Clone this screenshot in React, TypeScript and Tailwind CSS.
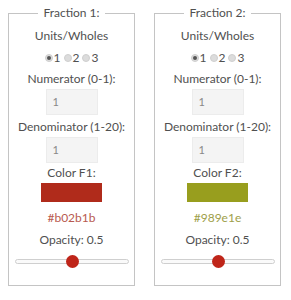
import React from "react";

interface FractionPanelProps {
    index: number;
    color: string;
    hexClass: string;
    swatchClass: string;
}

function Radio({ checked, label }: { checked: boolean; label: string }) {
    return (
        <span className="flex items-center gap-[1px]">
            <span className="w-[8px] h-[8px] rounded-full bg-[#dcdcdc] border border-[#cfcfcf] flex items-center justify-center">
                {checked && <span className="w-[4px] h-[4px] rounded-full bg-[#555]" />}
            </span>
            <span>{label}</span>
        </span>
    );
}

function FractionPanel({ index, color, hexClass, swatchClass }: FractionPanelProps) {
    return (
        <fieldset className="w-[127px] h-[283px] border border-[#c4c4c4] px-[2px] pt-[3px] flex flex-col items-center whitespace-nowrap">
            <legend className="mx-auto px-[5px] leading-[20px]">Fraction {index}:</legend>
            <div className="leading-[20px]">Units/Wholes</div>
            <div className="h-[20px] mt-[2px] flex items-center gap-[3px]">
                <Radio checked label="1" />
                <Radio checked={false} label="2" />
                <Radio checked={false} label="3" />
            </div>
            <div className="leading-[20px] mt-[1px]">Numerator (0-1):</div>
            <div className="w-[52px] h-[26px] bg-[#f4f4f4] border border-[#ececec] text-[#888] text-[11px] pl-[6px] flex items-center">1</div>
            <div className="leading-[20px] mt-[2px]">Denominator (1-20):</div>
            <div className="w-[52px] h-[26px] bg-[#f4f4f4] border border-[#ececec] text-[#888] text-[11px] pl-[6px] flex items-center">1</div>
            <div className="leading-[20px]">Color F{index}:</div>
            <div className={`w-[61px] h-[19px] ${swatchClass}`} />
            <div className={`leading-[20px] mt-[6px] ${hexClass}`}>{color}</div>
            <div className="leading-[20px] mt-[2px]">Opacity: 0.5</div>
            <div className="relative w-[114px] h-[14px] mt-[4px] flex items-center">
                <div className="w-full h-[5px] rounded-full border border-[#cfcfcf] bg-[#fafafa]" />
                <div className="absolute left-[51px] top-[1px] w-[13px] h-[13px] rounded-full bg-[#bf2519]" />
            </div>
        </fieldset>
    );
}

export default function App() {
    return (
        <div className="w-[291px] h-[300px] bg-white flex gap-[19px] pl-[8px] pt-[3px] text-[12px] text-[#505050] font-['Lato',sans-serif]">
            <FractionPanel index={1} color="#b02b1b" hexClass="text-[#b85a4f]" swatchClass="bg-[#b02b1b]" />
            <FractionPanel index={2} color="#989e1e" hexClass="text-[#9ea04a]" swatchClass="bg-[#989e1e]" />
        </div>
    );
}
